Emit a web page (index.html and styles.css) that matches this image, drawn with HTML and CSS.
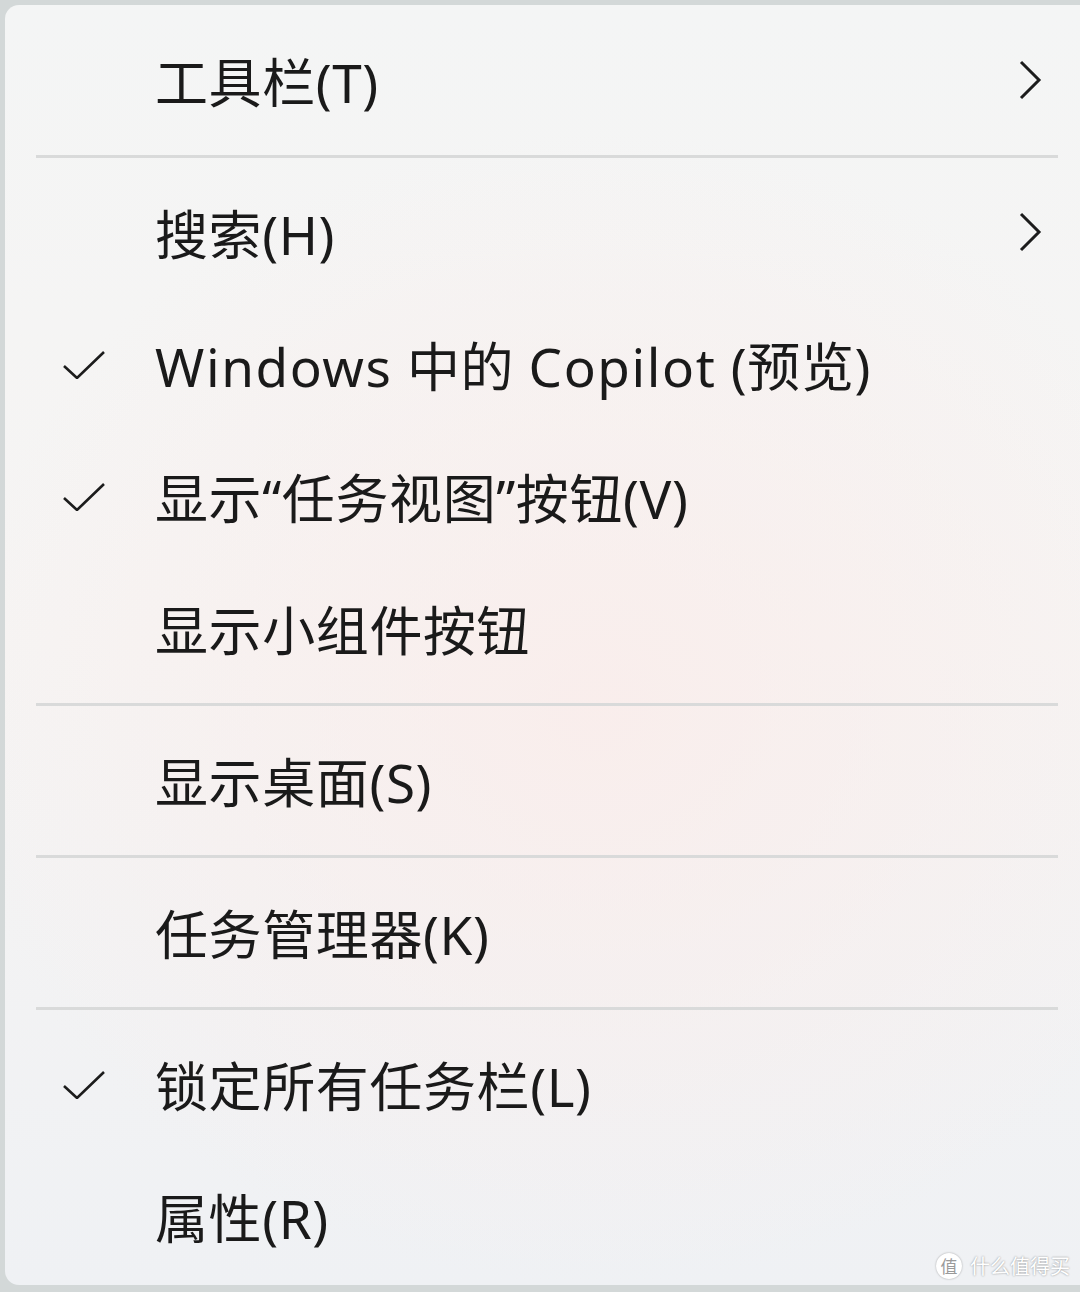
FILE: index.html
```html
<!DOCTYPE html>
<html lang="zh-CN">
<head>
<meta charset="utf-8">
<title>任务栏菜单</title>
<link rel="stylesheet" href="styles.css">
</head>
<body>
<div class="menu">
  <div class="item">
    <span class="check"></span>
    <span class="label">工具栏(T)</span>
    <svg class="chev" viewBox="0 0 24 40" width="24" height="40"><path d="M3 2 L21 20 L3 38" fill="none" stroke="#1c1c1c" stroke-width="3"/></svg>
  </div>
  <div class="sep"></div>
  <div class="item">
    <span class="check"></span>
    <span class="label">搜索(H)</span>
    <svg class="chev" viewBox="0 0 24 40" width="24" height="40"><path d="M3 2 L21 20 L3 38" fill="none" stroke="#1c1c1c" stroke-width="3"/></svg>
  </div>
  <div class="item">
    <span class="check"><svg viewBox="0 0 42 28" width="42" height="28"><path d="M1 15 L14 27 L41 1" fill="none" stroke="#1c1c1c" stroke-width="2.6"/></svg></span>
    <span class="label"><span class="latin">Windows</span> 中的 <span class="latin">Copilot</span> (预览)</span>
  </div>
  <div class="item">
    <span class="check"><svg viewBox="0 0 42 28" width="42" height="28"><path d="M1 15 L14 27 L41 1" fill="none" stroke="#1c1c1c" stroke-width="2.6"/></svg></span>
    <span class="label">显示“任务视图”按钮(V)</span>
  </div>
  <div class="item">
    <span class="check"></span>
    <span class="label">显示小组件按钮</span>
  </div>
  <div class="sep"></div>
  <div class="item">
    <span class="check"></span>
    <span class="label">显示桌面(S)</span>
  </div>
  <div class="sep"></div>
  <div class="item">
    <span class="check"></span>
    <span class="label">任务管理器(K)</span>
  </div>
  <div class="sep"></div>
  <div class="item">
    <span class="check"><svg viewBox="0 0 42 28" width="42" height="28"><path d="M1 15 L14 27 L41 1" fill="none" stroke="#1c1c1c" stroke-width="2.6"/></svg></span>
    <span class="label">锁定所有任务栏(L)</span>
  </div>
  <div class="item">
    <span class="check"></span>
    <span class="label">属性(R)</span>
  </div>
  <div class="watermark">
    <span class="wm-badge">值</span>
    <span class="wm-text">什么值得买</span>
  </div>
</div>
</body>
</html>
```

FILE: styles.css
```css
html, body {
  margin: 0;
  padding: 0;
}
body {
  width: 1080px;
  height: 1292px;
  background: #d3d8d8;
  overflow: hidden;
  font-family: "Noto Sans", "Noto Sans CJK SC", sans-serif;
}
.menu {
  position: relative;
  margin: 5px 0 0 5px;
  height: 1280px;
  box-sizing: border-box;
  padding-top: 11px;
  border-radius: 14px 0 0 14px;
  background:
    radial-gradient(ellipse 60% 45% at 55% 55%, rgba(250, 236, 234, 0.8), rgba(250, 236, 234, 0) 100%),
    linear-gradient(180deg, #f4f5f5 0%, #f6f4f3 50%, #eff1f4 100%);
}
.item {
  display: flex;
  align-items: center;
  height: 132px;
  color: #1a1a1a;
}
.check {
  width: 150px;
  flex: none;
  display: flex;
  align-items: center;
}
.check svg {
  margin-left: 58px;
  margin-top: -2px;
}
.label {
  font-size: 53px;
  line-height: 1;
  letter-spacing: 0.6px;
  white-space: nowrap;
  flex: 1;
}
.latin {
  letter-spacing: 1.6px;
}
.chev {
  margin-right: 38px;
  margin-top: -4px;
  flex: none;
}
.sep {
  height: 20px;
  box-sizing: border-box;
  padding-top: 7px;
  margin: 0 22px 0 31px;
}
.sep::before {
  content: "";
  display: block;
  height: 3px;
  background: #d9dada;
}
.watermark {
  position: absolute;
  right: 10px;
  bottom: 5px;
  display: flex;
  align-items: center;
  gap: 8px;
}
.wm-badge {
  width: 26px;
  height: 26px;
  border-radius: 50%;
  background: #ffffff;
  color: #9a9a9a;
  font-size: 17px;
  display: flex;
  align-items: center;
  justify-content: center;
  box-shadow: 0 0 2px rgba(0,0,0,0.35);
  font-family: "Noto Sans CJK SC", sans-serif;
}
.wm-text {
  color: #ffffff;
  font-size: 20px;
  font-family: "Noto Sans CJK SC", sans-serif;
  text-shadow: 0 0 2px rgba(0,0,0,0.45);
}
```
